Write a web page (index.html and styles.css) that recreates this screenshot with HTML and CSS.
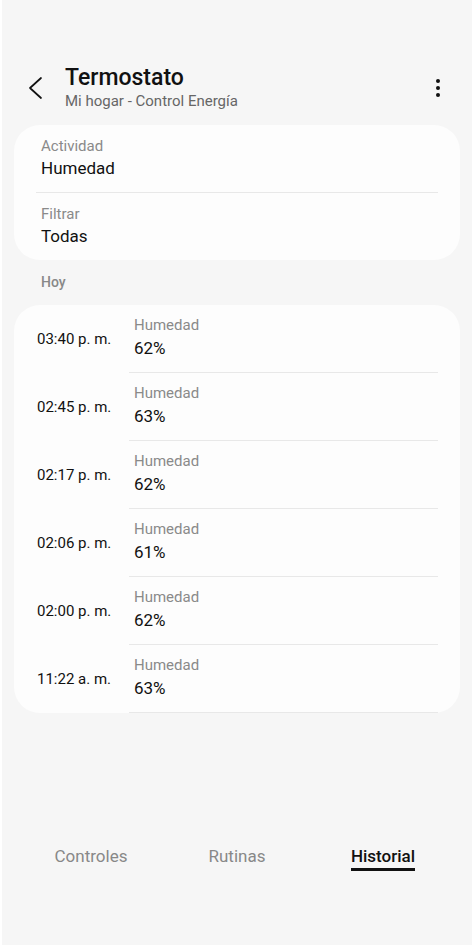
FILE: index.html
```html
<!DOCTYPE html>
<html lang="es">
<head>
    <meta charset="UTF-8">
    <meta name="viewport" content="width=device-width, initial-scale=1.0">
    <title>Termostato - Historial</title>
    <link rel="stylesheet" href="styles.css">
</head>
<body>

    <div class="app">
        <!-- cabecera -->
        <div class="header">
            <button class="back" type="button">
                <svg width="16" height="24" viewBox="0 0 16 24"><path d="M14 2 L3 12 L14 22" fill="none" stroke="#111" stroke-width="1.7" stroke-linecap="round" stroke-linejoin="round"/></svg>
            </button>
            <div class="titles">
                <div class="title">Termostato</div>
                <div class="subtitle">Mi hogar - Control Energía</div>
            </div>
            <button class="more" type="button">
                <span></span><span></span><span></span>
            </button>
        </div>

        <!-- filtros -->
        <div class="card filters">
            <div class="field">
                <div class="label">Actividad</div>
                <div class="value">Humedad</div>
            </div>
            <div class="field">
                <div class="label">Filtrar</div>
                <div class="value">Todas</div>
            </div>
        </div>

        <div class="section">Hoy</div>

        <div class="card history">
            <div class="row">
                <div class="time">03:40 p. m.</div>
                <div class="info"><div class="label">Humedad</div><div class="value">62%</div></div>
            </div>
            <div class="row">
                <div class="time">02:45 p. m.</div>
                <div class="info"><div class="label">Humedad</div><div class="value">63%</div></div>
            </div>
            <div class="row">
                <div class="time">02:17 p. m.</div>
                <div class="info"><div class="label">Humedad</div><div class="value">62%</div></div>
            </div>
            <div class="row">
                <div class="time">02:06 p. m.</div>
                <div class="info"><div class="label">Humedad</div><div class="value">61%</div></div>
            </div>
            <div class="row">
                <div class="time">02:00 p. m.</div>
                <div class="info"><div class="label">Humedad</div><div class="value">62%</div></div>
            </div>
            <div class="row">
                <div class="time">11:22 a. m.</div>
                <div class="info"><div class="label">Humedad</div><div class="value">63%</div></div>
            </div>
        </div>

        <!-- pestañas -->
        <div class="tabs">
            <div class="tab"><span>Controles</span></div>
            <div class="tab"><span>Rutinas</span></div>
            <div class="tab active"><span>Historial</span></div>
        </div>
    </div>

</body>
</html>
```

FILE: styles.css
```css
body {
    font-family: Roboto, 'Noto Sans', sans-serif;
    background-color: #fff;
    margin: 0;
    padding: 0 2px 3px 2px;
    color: #111;
}

.app {
    background-color: #f6f6f6;
    height: 945px;
    display: flex;
    flex-direction: column;
    padding: 0 12px;
    box-sizing: border-box;
}

/* cabecera */
.header {
    display: flex;
    align-items: center;
    padding-top: 64px;
    height: 48px;
    margin-bottom: 13px;
}

.header button {
    background: none;
    border: none;
    padding: 0;
    cursor: pointer;
}

.back {
    width: 51px;
    display: flex;
    justify-content: flex-start;
    padding: 0 0 0 13px !important;
    box-sizing: border-box;
}

.titles {
    flex: 1;
}

.title {
    font-size: 23px;
    font-weight: 500;
    line-height: 26px;
    color: #111;
}

.subtitle {
    font-size: 15px;
    line-height: 20px;
    color: #666;
}

.more {
    width: 22px;
    height: 24px;
    display: flex;
    flex-direction: column;
    align-items: center;
    justify-content: center;
    gap: 3px;
    margin-right: 11px;
    margin-top: 0;
}

.more span {
    width: 4px;
    height: 4px;
    border-radius: 50%;
    background-color: #111;
}

/* tarjetas */
.card {
    background-color: #fdfdfd;
    border-radius: 26px;
    padding: 0 22px;
}

.label {
    font-size: 15px;
    line-height: 20px;
    color: #8a8a8a;
}

.value {
    font-size: 17px;
    line-height: 22px;
    color: #111;
    margin-top: 1px;
}

.filters .field {
    padding: 11px 5px 13px 5px;
}

.filters .field:first-child {
    border-bottom: 1px solid #e8e8e8;
}

.section {
    font-size: 14px;
    font-weight: 500;
    line-height: 18px;
    color: #888;
    padding: 13px 27px 14px 27px;
}

.history .row {
    display: flex;
    height: 68px;
}

.history .time {
    width: 92px;
    font-size: 15px;
    color: #111;
    display: flex;
    align-items: center;
    padding-left: 1px;
}

.history .info {
    flex: 1;
    border-bottom: 1px solid #e8e8e8;
    padding: 10px 5px 0 5px;
}

.history .info .value {
    margin-top: 2px;
}

/* pestañas */
.tabs {
    margin-top: auto;
    display: grid;
    grid-template-columns: 1fr 1fr 1fr;
    justify-items: center;
    padding: 0 4px 74px 4px;
}

.tab span {
    display: block;
    font-size: 17px;
    color: #888;
    padding-bottom: 2px;
    border-bottom: 3px solid transparent;
}

.tab.active span {
    color: #111;
    font-weight: 500;
    border-bottom-color: #111;
}
```
